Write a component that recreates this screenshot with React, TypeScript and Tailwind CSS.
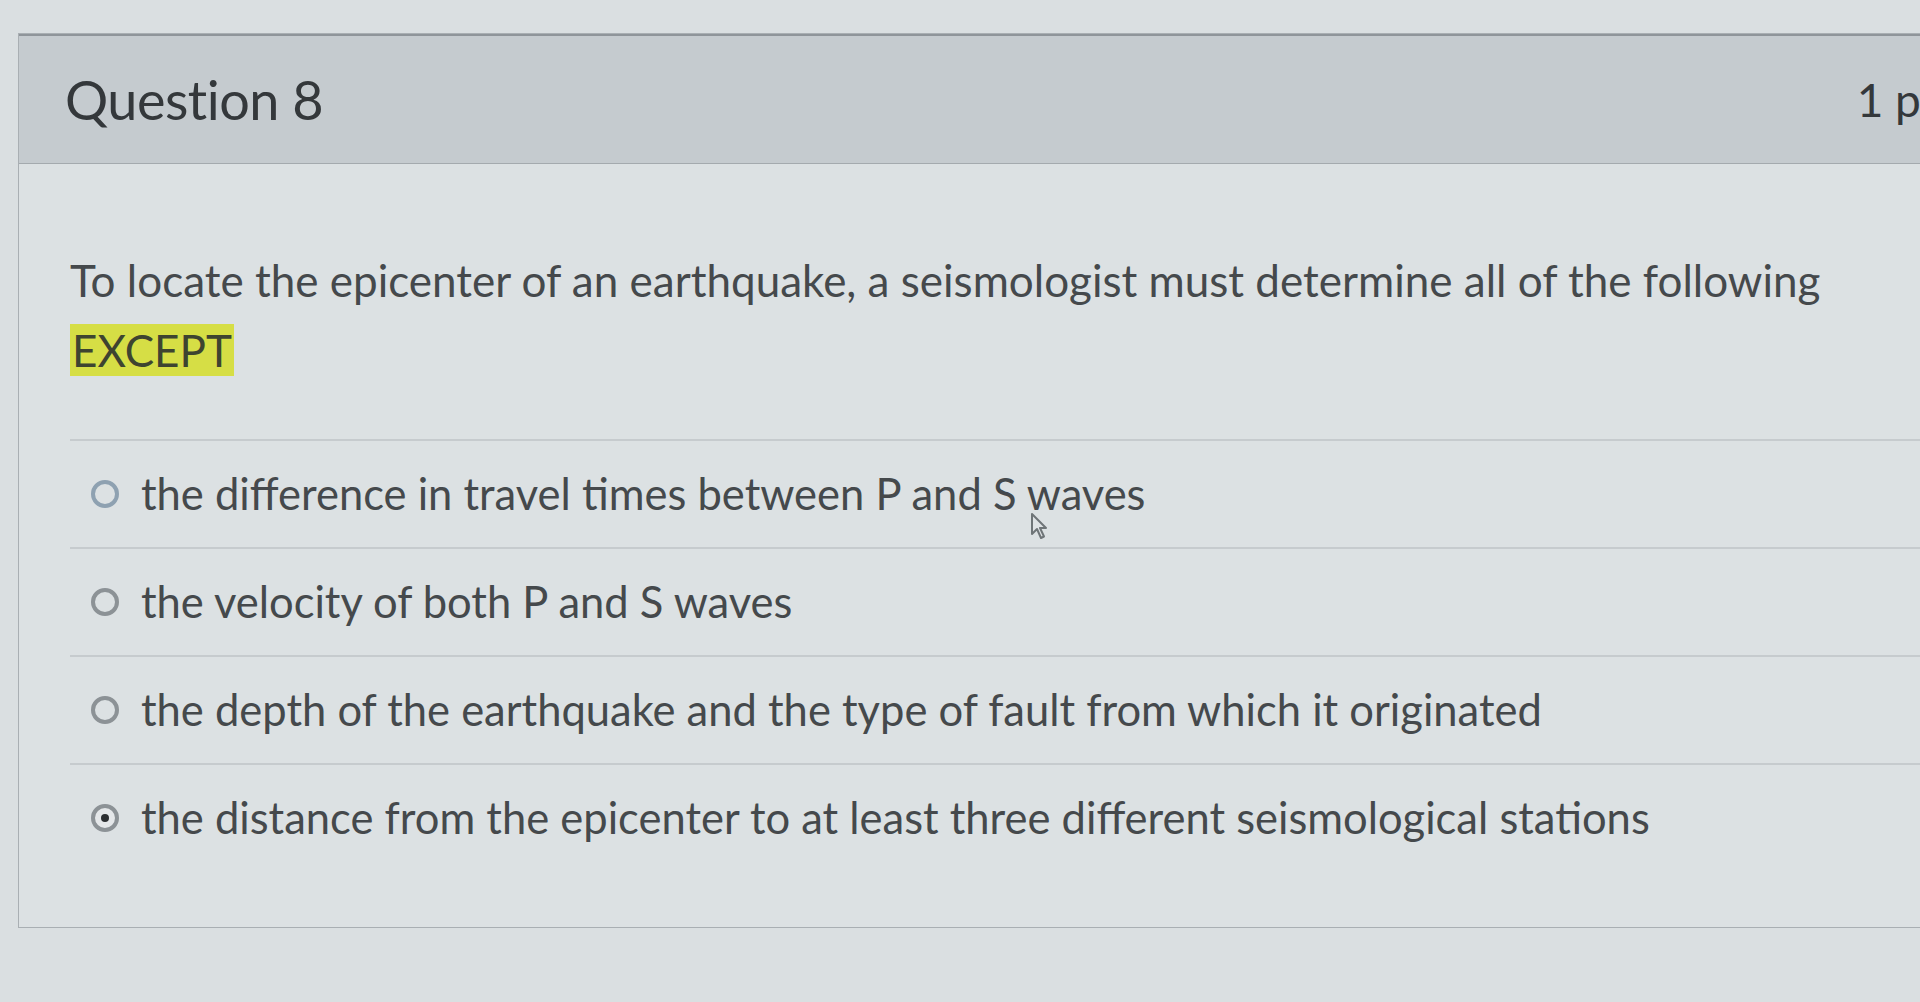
import React from "react";

const answers = [
  { id: "a", text: "the difference in travel times between P and S waves", focus: true },
  { id: "b", text: "the velocity of both P and S waves" },
  { id: "c", text: "the depth of the earthquake and the type of fault from which it originated" },
  { id: "d", text: "the distance from the epicenter to at least three different seismological stations", checked: true },
];

const Radio = ({ checked, focus }: { checked?: boolean; focus?: boolean }) => (
  <span
    className={`flex h-[28px] w-[28px] shrink-0 items-center justify-center rounded-full border-[4px] ${
      focus ? "border-[#8ea1b1]" : "border-[#8c9296]"
    } ${checked ? "bg-[#e4e7e9]" : "bg-transparent"}`}
  >
    {checked && <span className="h-[8px] w-[8px] rounded-full bg-[#2b2e31]" />}
  </span>
);

export default function App() {
  return (
    <div className="relative h-[1002px] w-[1920px] overflow-hidden bg-[#dadfe1] pt-[33px] font-['Lato','Noto_Sans',sans-serif]">
      {/* Question card */}
      <div className="ml-[18px] w-[1960px] border border-[#a9afb3] bg-[#dce1e3]">
        {/* Header */}
        <div className="flex h-[130px] items-center justify-between border-t-2 border-b border-t-[#8f959a] border-b-[#a4aaae] bg-[#c5cbcf] pl-[46px] pr-[20px]">
          <h2 className="text-[54px] leading-none tracking-[-0.5px] text-[#34383b]">Question 8</h2>
          <span className="text-[46px] leading-none text-[#34383b]">1 pts</span>
        </div>

        {/* Body */}
        <div className="pt-[81px] pb-[56px] pl-[51px]">
          <p className="w-[1820px] text-[44px] leading-[70px] text-[#45494c]">
            To locate the epicenter of an earthquake, a seismologist must determine all of the following{" "}
            <span className="bg-[#d6de45] px-[2px] text-[#3e4430]">EXCEPT</span>
          </p>

          <ul className="mt-[54px]">
            {answers.map((a) => (
              <li
                key={a.id}
                className="flex h-[108px] items-center gap-[22px] border-t-2 border-[#c6cbce] pl-[21px]"
              >
                <Radio checked={a.checked} focus={a.focus} />
                <span className="text-[43.5px] leading-none text-[#45494c]">{a.text}</span>
              </li>
            ))}
          </ul>
        </div>
      </div>

      {/* mouse pointer */}
      <svg
        className="absolute left-[1030px] top-[512px]"
        width="18"
        height="28"
        viewBox="0 0 18 28"
        fill="none"
      >
        <path
          d="M2 2 L2 22 L7 17 L11 26 L14 24.5 L10 16 L16 16 Z"
          stroke="#6f7578"
          strokeWidth="2"
          strokeLinejoin="round"
          fill="#dfe3e5"
        />
      </svg>
    </div>
  );
}
